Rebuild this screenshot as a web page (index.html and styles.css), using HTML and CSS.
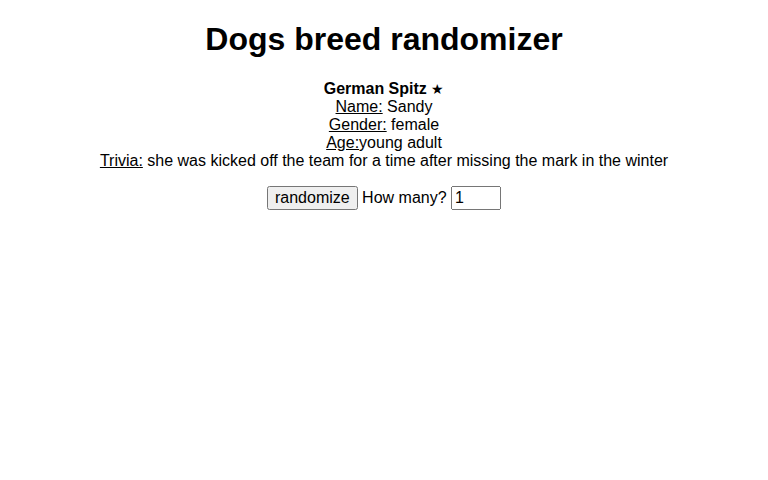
FILE: index.html
```html
<!DOCTYPE html>
<html lang="en">
<head>
  <meta charset="UTF-8" />
  <meta name="viewport" content="width=device-width, initial-scale=1.0" />
  <title>Dogs breed randomizer</title>
  <link rel="stylesheet" href="styles.css">
</head>
<body>
  <h1>Dogs breed randomizer</h1>
  <div class="dogs">
    <div class="dog">
      <div class="breed">German Spitz <span class="star">★</span></div>
      <div><span class="label">Name:</span> Sandy</div>
      <div><span class="label">Gender:</span> female</div>
      <div><span class="label">Age:</span>young adult</div>
      <div><span class="label">Trivia:</span> she was kicked off the team for a time after missing the mark in the winter</div>
    </div>
  </div>
  <form class="controls">
    <button type="button" class="randomize-btn">randomize</button>
    <label>How many? <input type="number" class="count" value="1"></label>
  </form>
</body>
</html>
```

FILE: styles.css
```css
body {
  font-family: 'Liberation Sans', Arial, sans-serif;
  text-align: center;
  color: #000;
  background: #fff;
}
h1 {
  font-size: 2em;
  margin: 13px 0 22px;
}
.breed {
  font-weight: bold;
}
.star {
  font-size: 14px;
  font-weight: normal;
}
.label {
  text-decoration: underline;
}
.controls {
  margin: 16px 0;
}
.randomize-btn {
  font-family: inherit;
  font-size: 16px;
}
.count {
  font-family: inherit;
  font-size: 16px;
  width: 42px;
  -moz-appearance: textfield;
}
.count::-webkit-inner-spin-button,
.count::-webkit-outer-spin-button {
  -webkit-appearance: none;
  margin: 0;
}
```
